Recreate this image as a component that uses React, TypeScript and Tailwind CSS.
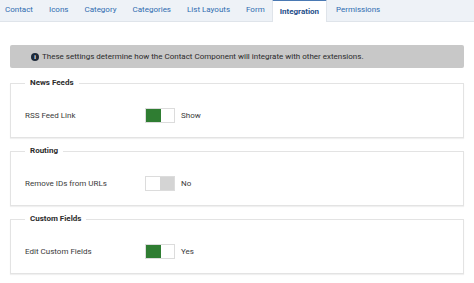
import React from "react";

const tabs = ["Contact", "Icons", "Category", "Categories", "List Layouts", "Form", "Integration", "Permissions"];

function Toggle({ on }: { on: boolean }) {
  return (
    <div className="flex h-[15px] w-[30px] border border-[#dcdcdc] bg-white">
      {on ? (
        <>
          <div className="w-[15px] bg-[#2f7d32]" />
          <div className="flex-1 bg-white" />
        </>
      ) : (
        <>
          <div className="flex-1 bg-white" />
          <div className="w-[14px] bg-[#d4d4d4]" />
        </>
      )}
    </div>
  );
}

function Group({ title, label, on, value }: { title: string; label: string; on: boolean; value: string }) {
  return (
    <fieldset className="mx-[10px] mb-[7px] h-[61px] border border-[#e3e3e3] px-[14px] shadow-[0_1px_1px_rgba(0,0,0,0.06)]">
      <legend className="px-[5px] text-[8px] font-bold text-[#2c2c2c]">{title}</legend>
      <div className="mt-[19px] flex items-center">
        <div className="w-[120px] text-[8px] text-[#3a3a3a]">{label}</div>
        <Toggle on={on} />
        <div className="ml-[6px] text-[8px] font-normal text-[#3a3a3a]">{value}</div>
      </div>
    </fieldset>
  );
}

export default function App() {
  return (
    <div className="h-[283px] w-[474px] bg-white font-['Roboto',sans-serif]">
      <div className="flex h-[22px] items-end border-b border-[#dfe4ea] bg-[#eef2f7] pl-[5px]">
        {tabs.map((t) =>
          t === "Integration" ? (
            <div
              key={t}
              className="-mb-px mr-[9px] -ml-[9px] flex h-[23px] items-center border-t-2 border-x border-t-[#4a79b3] border-x-[#dfe4ea] bg-white px-[7px] text-[8px] font-bold text-[#1f4f8a]"
            >
              {t}
            </div>
          ) : (
            <div key={t} className="mr-[16px] flex h-[22px] items-center text-[8px] text-[#2f6cb0]">
              {t}
            </div>
          )
        )}
      </div>
      <div className="mx-[10px] mt-[23px] flex h-[23px] items-center rounded-[2px] bg-[#c8c8c8] px-[21px] text-[8px] text-[#2b2b2b]">
        <span className="mr-[3px] flex h-[8px] w-[8px] items-center justify-center rounded-full bg-[#1e2a3a] text-[6px] font-bold text-white">
          i
        </span>
        These settings determine how the Contact Component will integrate with other extensions.
      </div>
      <div className="mt-[9px]">
        <Group title="News Feeds" label="RSS Feed Link" on value="Show" />
        <Group title="Routing" label="Remove IDs from URLs" on={false} value="No" />
        <Group title="Custom Fields" label="Edit Custom Fields" on value="Yes" />
      </div>
    </div>
  );
}
